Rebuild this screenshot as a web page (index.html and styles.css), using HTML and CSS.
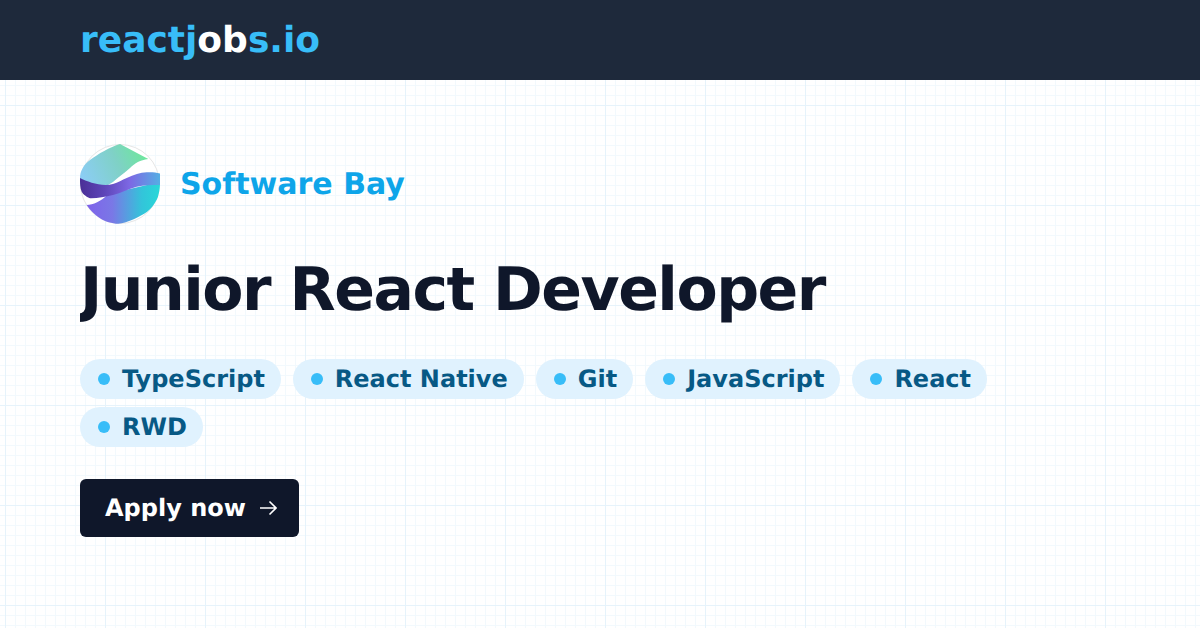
FILE: index.html
```html
<!DOCTYPE html>
<html lang="en">
<head>
<meta charset="utf-8">
<title>Junior React Developer</title>
<link rel="stylesheet" href="styles.css">
</head>
<body>
<header class="topbar">
  <div class="brand">reactj<span class="brand-white">ob</span>s.io</div>
</header>
<main class="content">
  <div class="company">
    <svg class="company-logo" viewBox="0 0 80 80" aria-hidden="true">
      <defs>
        <linearGradient id="gTop" x1="0" y1="0.6" x2="1" y2="0.3"><stop offset="0" stop-color="#8bcdf3"/><stop offset="0.55" stop-color="#7fd1c6"/><stop offset="1" stop-color="#6ce89a"/></linearGradient>
        <linearGradient id="gBand" x1="0" y1="0" x2="1" y2="0"><stop offset="0" stop-color="#4a2f96"/><stop offset="0.3" stop-color="#5d45b8"/><stop offset="0.62" stop-color="#7d68e4"/><stop offset="1" stop-color="#55aee4"/></linearGradient>
        <linearGradient id="gBottom" x1="0" y1="0" x2="1" y2="0"><stop offset="0" stop-color="#7f63ea"/><stop offset="0.35" stop-color="#7a78e6"/><stop offset="0.75" stop-color="#33c4da"/><stop offset="1" stop-color="#28d8d8"/></linearGradient>
      </defs>
      <circle cx="40" cy="40" r="39.500" fill="#fff" stroke="#e6e6e6"/>
      <path fill="url(#gTop)" d="M0 34C0 28 3 21 10 16C18 10 30 3 40 0L68.300 15C60 16 55 19 50 24C45 29 38 33 33 38L23 44L0 40Z"/>
      <path fill="url(#gBottom)" d="M6.700 61C13 60.500 21 58 28 50L80 38C80 45 79 49 78 52.700C75 60 71 65 65 69.300C57 74 47 79 38.300 79.800C32 79.800 25 77.500 20 74.300C14 70.500 10 66 6.700 61Z"/>
      <path fill="url(#gBand)" d="M0 34C8 38 22 43 33 40C38 38.500 42 36 46.700 34C54 31 60 28.500 66.700 28.300C72 28 76 28.500 80 29.500L80 41C72 41 64 41 56.700 42.700C48 45 41 49 33 51C25 53 17 54.500 10 54.300C5 52 3 50 1.700 47.700C0 44 0 39 0 34Z"/>
    </svg>
    <span class="company-name">Software Bay</span>
  </div>
  <h1 class="title">Junior React Developer</h1>
  <ul class="tags">
    <li class="tag">TypeScript</li>
    <li class="tag">React Native</li>
    <li class="tag">Git</li>
    <li class="tag">JavaScript</li>
    <li class="tag">React</li>
    <li class="tag">RWD</li>
  </ul>
  <a class="apply" href="#">Apply now
    <svg class="apply-arrow" viewBox="0 0 18 18" aria-hidden="true"><path d="M1 9h16M10.500 2.500 17 9l-6.500 6.500"/></svg>
  </a>
</main>
</body>
</html>
```
FILE: styles.css
```css
* { box-sizing: border-box; }
html, body { margin: 0; height: 100%; }
body {
  width: 1200px;
  height: 628px;
  overflow: hidden;
  display: flex;
  flex-direction: column;
  font-family: "DejaVu Sans", sans-serif;
  text-rendering: geometricPrecision;
  background-color: #fff;
  background-image:
    linear-gradient(to right, #e6f3fb 1px, transparent 1px),
    linear-gradient(to bottom, #e6f3fb 1px, transparent 1px),
    linear-gradient(to right, #f2f9fd 1px, transparent 1px),
    linear-gradient(to bottom, #f2f9fd 1px, transparent 1px);
  background-size: 100px 100px, 100px 100px, 10px 10px, 10px 10px;
  background-position: 5px 5px, 5px 5px, 5px 5px, 5px 5px;
}
.topbar {
  height: 80px;
  flex: none;
  display: flex;
  align-items: center;
  padding: 0 80px;
  background: #1e293b;
}
.brand {
  font-size: 36px;
  font-weight: 700;
  color: #38bdf8;
}
.brand-white { color: #fff; }
.content {
  flex: 1;
  padding: 64px 80px 0;
}
.company {
  display: flex;
  align-items: center;
  gap: 20px;
}
.company-logo { width: 80px; height: 80px; display: block; flex: none; }
.company-name {
  font-size: 30px;
  font-weight: 700;
  color: #0ea5e9;
}
.title {
  margin: 30px 0 0;
  font-size: 60px;
  line-height: 72px;
  font-weight: 700;
  letter-spacing: -1.500px;
  color: #0f172a;
  overflow: hidden;
}
.tags {
  list-style: none;
  margin: 33px 0 0;
  padding: 0;
  display: flex;
  flex-wrap: wrap;
  gap: 8px 12px;
}
.tag {
  height: 40px;
  display: flex;
  align-items: center;
  gap: 12px;
  padding: 0 16px 0 18px;
  border-radius: 20px;
  background: #e0f2fe;
  color: #075985;
  font-size: 24px;
  font-weight: 700;
}
.tag::before {
  content: "";
  width: 12px;
  height: 12px;
  border-radius: 50%;
  background: #38bdf8;
}
.apply {
  margin-top: 32px;
  width: 219px;
  height: 58px;
  display: flex;
  align-items: center;
  gap: 13px;
  padding-left: 25px;
  border-radius: 6px;
  background: #0f172a;
  color: #fff;
  font-size: 24px;
  font-weight: 700;
  text-decoration: none;
}
.apply-arrow {
  width: 18px;
  height: 18px;
  fill: none;
  stroke: #fff;
  stroke-width: 1.600;
}
```
